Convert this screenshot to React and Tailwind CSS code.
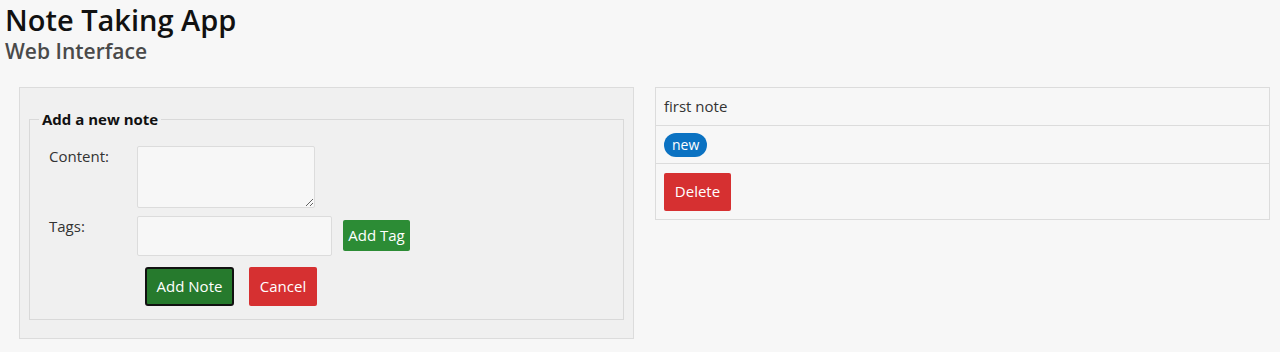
import React, { useState } from "react";

const NoteForm = () => {
  const [content, setContent] = useState("");
  const [tag, setTag] = useState("");

  return (
    <div className="w-[615px] h-[252px] bg-[#f0f0f0] border border-[#dcdcdc] px-[9px] pt-[22px]">
      <fieldset className="border border-[#d9d9d9] h-[210px] pl-[9px] pr-2 pt-[18px]">
        <legend className="px-[3px] text-[15px] font-bold text-[#111] leading-[18px]">
          Add a new note
        </legend>
        <div className="flex items-start pl-[10px]">
          <label className="w-[88px] text-[15px] text-[#333] leading-[20px]">
            Content:
          </label>
          <textarea
            className="w-[178px] h-[62px] bg-[#f7f7f7] border border-[#dcdcdc] rounded-[2px] resize"
            value={content}
            onChange={(e) => setContent(e.target.value)}
          />
        </div>
        <div className="flex items-start mt-[8px] pl-[10px]">
          <label className="w-[88px] text-[15px] text-[#333] leading-[20px]">
            Tags:
          </label>
          <input
            className="w-[195px] h-[40px] bg-[#f7f7f7] border border-[#dcdcdc] rounded-[2px]"
            value={tag}
            onChange={(e) => setTag(e.target.value)}
          />
          <button className="ml-[11px] mt-[4px] w-[67px] h-[31px] bg-[#2c8c35] text-white text-[15px] rounded-[2px]">
            Add Tag
          </button>
        </div>
        <div className="flex gap-[15px] mt-[11px] ml-[106px]">
          <button className="w-[89px] h-[39px] bg-[#267a2d] border-2 border-[#111] text-white text-[15px] rounded-[3px]">
            Add Note
          </button>
          <button className="w-[68px] h-[39px] bg-[#d63031] text-white text-[15px] rounded-[2px]">
            Cancel
          </button>
        </div>
      </fieldset>
    </div>
  );
};

const NoteCard = ({ note }) => {
  return (
    <div className="w-[615px] border border-[#dcdcdc] bg-[#f7f7f7] text-[15px]">
      <div className="h-[38px] flex items-center px-[8px] text-[#333] border-b border-[#dcdcdc]">
        {note.content}
      </div>
      <div className="h-[38px] flex items-center gap-1 px-[8px] border-b border-[#dcdcdc]">
        {note.tags.map((t, i) => (
          <span
            key={i}
            className="h-[24px] px-[8px] flex items-center rounded-full bg-[#0b72c2] text-white text-[14px]"
          >
            {t}
          </span>
        ))}
      </div>
      <div className="h-[55px] flex items-center px-[8px]">
        <button className="w-[67px] h-[38px] bg-[#d63031] text-white text-[15px] rounded-[2px]">
          Delete
        </button>
      </div>
    </div>
  );
};

export default function App() {
  const notes = [{ content: "first note", tags: ["new"] }];

  return (
    <div
      className="min-h-[352px] bg-[#f7f7f7] text-[#111]"
      style={{ fontFamily: "'Open Sans', 'Noto Sans', sans-serif" }}
    >
      <div className="px-[5px] pt-[2px]">
        <h1 className="text-[29px] font-semibold leading-[36px] text-[#111]">
          Note Taking App
        </h1>
        <h2 className="text-[21px] font-semibold leading-[26px] text-[#4a4a4a]">
          Web Interface
        </h2>
      </div>
      <div className="flex gap-[21px] pl-[19px] mt-[23px]">
        <NoteForm />
        <div>
          {notes.map((n, i) => (
            <NoteCard key={i} note={n} />
          ))}
        </div>
      </div>
    </div>
  );
}
